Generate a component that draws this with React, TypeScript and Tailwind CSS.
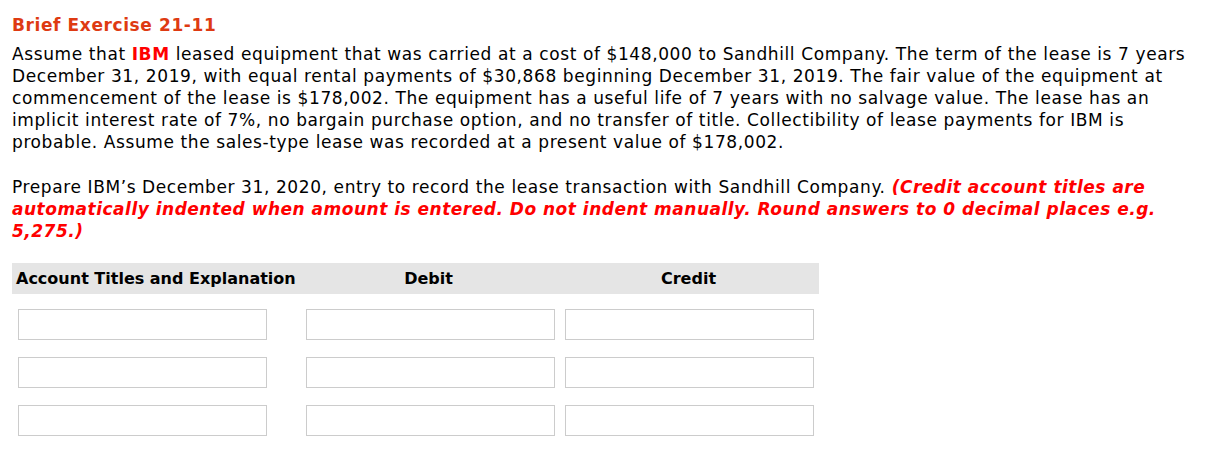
const rows = [0, 1, 2];

function Field({ width }: { width: string }) {
  return <div className={`${width} h-[31px] border border-[#cccccc] bg-white`} />;
}

export default function App() {
  return (
    <div className="min-h-[457px] bg-white px-[12px] pt-[14px] font-['DejaVu_Sans',Verdana,sans-serif] text-[17px] leading-[22px] tracking-[0.6px] text-black">
      <h1 className="font-bold tracking-[0.6px] text-[#de3a12]">Brief Exercise 21-11</h1>

      <p className="mt-[7px] whitespace-nowrap">
        <span className="block">
          Assume that <b className="text-[#ff0000]">IBM</b> leased equipment that was carried at a cost of $148,000 to Sandhill Company. The term of the lease is 7 years
        </span>
        <span className="block">
          December 31, 2019, with equal rental payments of $30,868 beginning December 31, 2019. The fair value of the equipment at
        </span>
        <span className="block">
          commencement of the lease is $178,002. The equipment has a useful life of 7 years with no salvage value. The lease has an
        </span>
        <span className="block">
          implicit interest rate of 7%, no bargain purchase option, and no transfer of title. Collectibility of lease payments for IBM is
        </span>
        <span className="block">probable. Assume the sales-type lease was recorded at a present value of $178,002.</span>
      </p>

      <p className="mt-[23px] whitespace-nowrap">
        <span className="block">
          Prepare IBM’s December 31, 2020, entry to record the lease transaction with Sandhill Company.{' '}
          <b className="italic tracking-[0.5px] text-[#ff0000]">(Credit account titles are</b>
        </span>
        <b className="block italic tracking-[0.5px] text-[#ff0000]">
          automatically indented when amount is entered. Do not indent manually. Round answers to 0 decimal places e.g.
        </b>
        <b className="block italic tracking-[0.5px] text-[#ff0000]">5,275.)</b>
      </p>

      <div className="mt-[21px] w-[807px]">
        <div className="flex h-[31px] items-center bg-[#e5e5e5] pt-[1px] text-[16px] font-bold tracking-normal">
          <div className="w-[288px] pl-[4px]">Account Titles and Explanation</div>
          <div className="w-[259px] pr-[2px] text-center">Debit</div>
          <div className="w-[260px] pl-[4px] pr-[5px] text-center">Credit</div>
        </div>

        <div className="mt-[15px] flex flex-col gap-[17px]">
          {rows.map((r) => (
            <div key={r} className="flex">
              <div className="w-[288px] pl-[6px]">
                <Field width="w-[249px]" />
              </div>
              <div className="w-[259px] pl-[6px]">
                <Field width="w-[249px]" />
              </div>
              <div className="w-[260px] pl-[6px]">
                <Field width="w-[249px]" />
              </div>
            </div>
          ))}
        </div>
      </div>
    </div>
  );
}
